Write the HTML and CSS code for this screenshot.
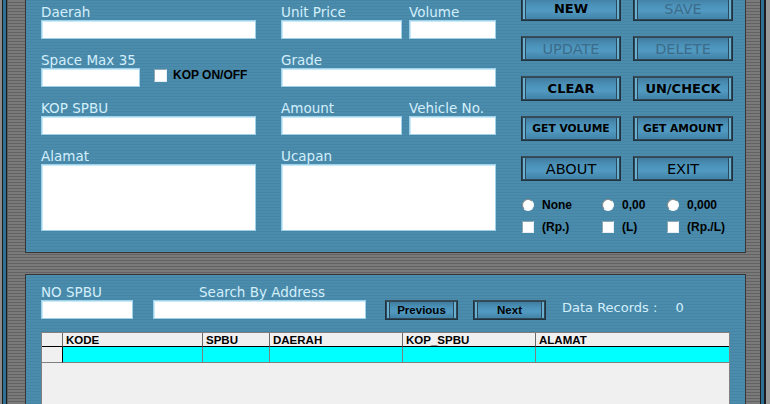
FILE: index.html
```html
<!DOCTYPE html>
<html>
<head>
<meta charset="utf-8">
<link rel="stylesheet" href="styles.css">
</head>
<body>
<div class="screen">
  <div class="edge edge-left"></div>
  <div class="desk">
    <section class="panel panel-top">
      <div class="form">
        <div class="field">
          <div class="label">Daerah</div>
          <div class="input"></div>
        </div>
        <div class="pair">
          <div class="field w121">
            <div class="label">Unit Price</div>
            <div class="input"></div>
          </div>
          <div class="field grow">
            <div class="label">Volume</div>
            <div class="input"></div>
          </div>
        </div>
        <div class="field">
          <div class="label">Space Max 35</div>
          <div class="inline">
            <div class="input w99"></div>
            <label class="check-inline"><span class="box kop"></span><span class="opt-text">KOP ON/OFF</span></label>
          </div>
        </div>
        <div class="field">
          <div class="label">Grade</div>
          <div class="input"></div>
        </div>
        <div class="field">
          <div class="label">KOP SPBU</div>
          <div class="input"></div>
        </div>
        <div class="pair">
          <div class="field w121">
            <div class="label">Amount</div>
            <div class="input"></div>
          </div>
          <div class="field grow">
            <div class="label">Vehicle No.</div>
            <div class="input"></div>
          </div>
        </div>
        <div class="field">
          <div class="label">Alamat</div>
          <div class="input area"></div>
        </div>
        <div class="field">
          <div class="label">Ucapan</div>
          <div class="input area"></div>
        </div>
      </div>
      <div class="side">
        <div class="buttons">
          <div class="btn bold">NEW</div>
          <div class="btn reg disabled">SAVE</div>
          <div class="btn reg disabled">UPDATE</div>
          <div class="btn reg disabled">DELETE</div>
          <div class="btn bold">CLEAR</div>
          <div class="btn bold">UN/CHECK</div>
          <div class="btn small">GET VOLUME</div>
          <div class="btn small">GET AMOUNT</div>
          <div class="btn reg">ABOUT</div>
          <div class="btn reg">EXIT</div>
        </div>
        <div class="options">
          <label class="opt"><span class="radio"></span><span class="opt-text">None</span></label>
          <label class="opt"><span class="radio"></span><span class="opt-text">0,00</span></label>
          <label class="opt"><span class="radio"></span><span class="opt-text">0,000</span></label>
          <label class="opt"><span class="box"></span><span class="opt-text">(Rp.)</span></label>
          <label class="opt"><span class="box"></span><span class="opt-text">(L)</span></label>
          <label class="opt"><span class="box"></span><span class="opt-text">(Rp./L)</span></label>
        </div>
      </div>
    </section>

    <section class="panel panel-bottom">
      <div class="toolbar">
        <div class="field w92">
          <div class="label">NO SPBU</div>
          <div class="input"></div>
        </div>
        <div class="field w213 search">
          <div class="label search-label">Search By Address</div>
          <div class="input"></div>
        </div>
        <div class="nav-btn prev">Previous</div>
        <div class="nav-btn next">Next</div>
        <div class="records">Data Records :<span class="count">0</span></div>
      </div>
      <div class="grid">
        <div class="cell head sel"></div>
        <div class="cell head">KODE</div>
        <div class="cell head">SPBU</div>
        <div class="cell head">DAERAH</div>
        <div class="cell head">KOP_SPBU</div>
        <div class="cell head last">ALAMAT</div>
        <div class="cell row sel"></div>
        <div class="cell row"></div>
        <div class="cell row"></div>
        <div class="cell row"></div>
        <div class="cell row"></div>
        <div class="cell row last"></div>
        <div class="grid-empty"></div>
      </div>
    </section>
  </div>
  <div class="edge edge-right"></div>
</div>
</body>
</html>
```

FILE: styles.css
```css
html, body {
  margin: 0;
  padding: 0;
}
body {
  width: 770px;
  height: 404px;
  overflow: hidden;
  background: #707070;
}
.screen {
  display: flex;
  width: 770px;
  height: 404px;
  overflow: hidden;
}
.edge-left {
  width: 8px;
  flex: none;
  background: linear-gradient(to right,
    #8a8a8a 0 2px, #1c1c1c 2px 3px, #2e6f94 3px 6px, #1c1c1c 6px 7px, #5c5c5c 7px 8px);
}
.edge-right {
  width: 10px;
  flex: none;
  background: linear-gradient(to right,
    #1c1c1c 0 1px, #2e6f94 1px 4px, #1c1c1c 4px 6px, #9a9a9a 6px 10px);
}
.desk {
  width: 752px;
  flex: none;
  box-sizing: border-box;
  padding: 0 14px 0 17px;
  background: repeating-linear-gradient(to bottom, #7a7a7a 0 2px, #626262 2px 3px);
}
.panel {
  box-sizing: border-box;
  width: 721px;
  border: 1px solid #363636;
  background: repeating-linear-gradient(to bottom, #4b8cad 0 2px, #4585a6 2px 3px);
}
.panel-top {
  margin-top: -12px;
  height: 265px;
  display: flex;
  align-items: flex-start;
  gap: 25px;
  padding: 7px 11px 0 15px;
}
.panel-bottom {
  margin-top: 21px;
  height: 220px;
  padding: 9px 15px 0 15px;
}

/* form */
.form {
  margin-top: 8px;
  display: grid;
  grid-template-columns: 215px 215px;
  column-gap: 25px;
  row-gap: 13px;
  align-items: start;
  align-content: start;
}
.field {
  display: flex;
  flex-direction: column;
}
.label {
  font-family: "DejaVu Sans", sans-serif;
  font-size: 13.5px;
  line-height: 16px;
  color: #d3effb;
  white-space: nowrap;
}
.input {
  box-sizing: border-box;
  height: 19px;
  background: #fff;
  border: 1px solid #9fd2ea;
  box-shadow: inset 1px 1px 0 #c9ebf8;
}
.input.area {
  height: 67px;
}
.pair {
  display: flex;
  gap: 7px;
}
.w121 { width: 121px; }
.w99 { width: 99px; flex: none; }
.w92 { width: 92px; }
.w213 { width: 213px; }
.grow { flex: 1; }
.inline {
  display: flex;
  align-items: flex-start;
  gap: 14px;
}
.check-inline {
  display: flex;
  align-items: center;
  gap: 6px;
  margin-top: 1px;
}
.opt-text {
  font-family: "Liberation Sans", Arial, sans-serif;
  font-weight: bold;
  font-size: 12px;
  line-height: 13px;
  color: #000;
  white-space: nowrap;
}
.box {
  box-sizing: border-box;
  display: block;
  width: 12px;
  height: 12px;
  flex: none;
  background: #fff;
  border: 1px solid;
  border-color: #8ea6b4 #e4eef2 #e4eef2 #8ea6b4;
}
.box.kop {
  width: 13px;
  height: 13px;
}
.radio {
  box-sizing: border-box;
  display: block;
  width: 12px;
  height: 12px;
  flex: none;
  border-radius: 50%;
  background: #fff;
  border: 1px solid;
  border-color: #8a8a8a #f4f4f4 #f4f4f4 #8a8a8a;
}

/* side buttons */
.side {
  display: flex;
  flex-direction: column;
}
.buttons {
  display: grid;
  grid-template-columns: 100px 100px;
  grid-auto-rows: 25px;
  column-gap: 12px;
  row-gap: 15px;
}
.btn, .nav-btn {
  box-sizing: border-box;
  display: flex;
  align-items: center;
  justify-content: center;
  color: #000;
  white-space: nowrap;
  border: 1px solid #22323d;
  border-top-color: #3c4a54;
  background: linear-gradient(to bottom, #3f789a 0%, #4b92b9 35%, #519ac1 60%, #407ea3 100%);
  box-shadow:
    inset 0 1px 0 #2c4a5c,
    inset 0 -1px 0 #2c4a5c,
    inset 1px 0 0 #2b485a,
    inset 3px 0 0 #6aaed0,
    inset 4px 0 0 #2b485a,
    inset -1px 0 0 #2b485a,
    inset -3px 0 0 #6aaed0,
    inset -4px 0 0 #2b485a;
}
.btn {
  height: 25px;
  font-family: "DejaVu Sans", sans-serif;
}
.btn.bold {
  font-weight: bold;
  font-size: 13px;
}
.btn.small {
  font-weight: bold;
  font-size: 10.7px;
}
.btn.reg {
  font-size: 14.5px;
}
.btn.disabled {
  color: #3c6c8a;
}
.options {
  margin-top: 18px;
  padding-left: 1px;
  display: grid;
  grid-template-columns: 80px 65px auto;
  row-gap: 10px;
}
.opt {
  display: flex;
  align-items: center;
  gap: 8px;
  height: 12px;
}

/* bottom toolbar */
.toolbar {
  display: flex;
  align-items: flex-start;
}
.search {
  margin-left: 20px;
}
.search-label {
  padding-left: 46px;
}
.nav-btn {
  width: 73px;
  height: 20px;
  margin-top: 16px;
  font-family: "Liberation Sans", Arial, sans-serif;
  font-weight: bold;
  font-size: 11.5px;
}
.prev { margin-left: 19px; }
.next { margin-left: 15px; }
.records {
  margin-top: 16px;
  margin-left: 16px;
  font-family: "DejaVu Sans", sans-serif;
  font-size: 13px;
  line-height: 16px;
  color: #d3effb;
  white-space: nowrap;
}
.count {
  margin-left: 18px;
}

/* data grid */
.grid {
  margin-top: 12px;
  width: 689px;
  height: 120px;
  box-sizing: border-box;
  border: 1px solid #808080;
  border-bottom: none;
  background: #f0f0f0;
  display: grid;
  grid-template-columns: 21px 140px 67px 133px 133px 193px;
  grid-template-rows: 14px 16px 1fr;
}
.cell {
  box-sizing: border-box;
  border-right: 1px solid #808080;
  font-family: "Liberation Sans", Arial, sans-serif;
  font-weight: bold;
  font-size: 11.5px;
  line-height: 11px;
  color: #000;
  white-space: nowrap;
  overflow: hidden;
}
.cell.head {
  background: #f0f0f0;
  border-bottom: 1px solid #000;
  padding: 2px 0 0 3px;
  border-right-color: #6a6a6a;
}
.cell.row {
  background: #00ffff;
  border-bottom: 1px solid #808080;
}
.cell.row.sel {
  background: #f0f0f0;
  border-right-color: #000;
}
.cell.last {
  border-right: none;
}
.grid-empty {
  grid-column: 1 / -1;
  background: #f0f0f0;
}
```
